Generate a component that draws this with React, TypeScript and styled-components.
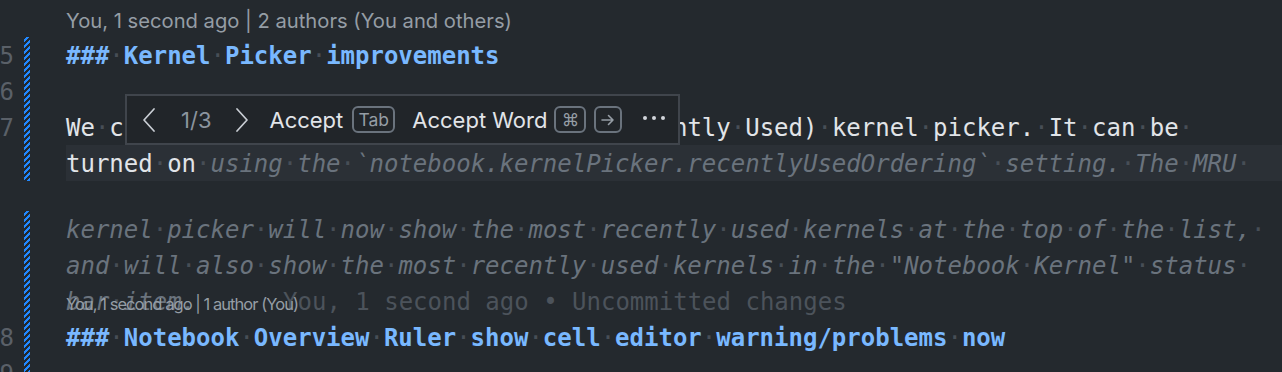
import React from 'react';
import styled, { createGlobalStyle } from 'styled-components';

const GlobalStyle = createGlobalStyle`
  html, body {
    margin: 0;
    padding: 0;
    background: #24292e;
  }
  body {
    width: 1282px;
    height: 372px;
    overflow: hidden;
  }
`;

const Editor = styled.div`
  position: relative;
  width: 1282px;
  height: 372px;
  overflow: hidden;
  background: #24292e;
  font-family: 'DejaVu Sans Mono', 'Liberation Mono', monospace;
  font-size: 24px;
`;

const Row = styled.div<{ $h?: number }>`
  display: flex;
  height: ${({ $h }) => $h ?? 36}px;
  line-height: 38px;
`;

const LineNo = styled.div`
  flex: none;
  width: 14px;
  display: flex;
  justify-content: flex-end;
  color: #5a6068;
  white-space: nowrap;
`;

const Stripe = styled.div<{ $on?: boolean }>`
  flex: none;
  width: 6px;
  margin-left: 10px;
  background: ${({ $on }) =>
    $on
      ? 'repeating-linear-gradient(-45deg, #2188ff 0px, #2188ff 2.2px, transparent 2.2px, transparent 4.25px)'
      : 'transparent'};
`;

const Content = styled.div<{ $current?: boolean }>`
  position: relative;
  flex: 1;
  margin-left: 36px;
  white-space: pre;
  color: #e1e4e8;
  background: ${({ $current }) => ($current ? '#2b3036' : 'transparent')};
`;

const Heading = styled.span`
  color: #79b8ff;
  font-weight: bold;
`;

const Plain = styled.span`
  color: #e1e4e8;
`;

const Ghost = styled.span`
  color: #6a737d;
  font-style: italic;
`;

const Dot = styled.span`
  color: #474e56;
  font-style: normal;
  font-weight: normal;
`;

const Blame = styled.span`
  margin-left: 87px;
  color: #4c535b;
`;

const CodeLens = styled.div<{ $overlay?: boolean }>`
  position: ${({ $overlay }) => ($overlay ? 'absolute' : 'static')};
  left: 0;
  top: 3px;
  padding-top: ${({ $overlay }) => ($overlay ? 0 : 3)}px;
  line-height: 36px;
  font-family: Inter, 'Noto Sans', sans-serif;
  font-size: ${({ $overlay }) => ($overlay ? 16.5 : 20.2)}px;
  letter-spacing: ${({ $overlay }) => ($overlay ? -0.95 : 0)}px;
  color: #959da5;
  white-space: nowrap;
`;

const Toolbar = styled.div`
  position: absolute;
  left: 59px;
  top: -15px;
  width: 555px;
  height: 51px;
  box-sizing: border-box;
  border: 2px solid #40454c;
  background: #212529;
  display: flex;
  align-items: center;
  gap: 20px;
  padding-left: 15px;
  font-family: Inter, 'Noto Sans', sans-serif;
  font-size: 22px;
  line-height: 1;
  color: #e1e4e8;
`;

const Group = styled.div<{ $gap: number; $ml?: number }>`
  display: flex;
  align-items: center;
  gap: ${({ $gap }) => $gap}px;
  margin-left: ${({ $ml }) => $ml ?? 0}px;
`;

const Count = styled.span`
  color: #8b949e;
  margin-left: 1px;
`;

const Kbd = styled.span<{ $w: number }>`
  box-sizing: border-box;
  width: ${({ $w }) => $w}px;
  height: 27px;
  border: 2px solid #6a737d;
  border-radius: 6px;
  display: flex;
  align-items: center;
  justify-content: center;
  color: #959da5;
  font-size: 17.5px;
  font-family: Inter, 'DejaVu Sans', sans-serif;
`;

const Icon = styled.svg`
  display: block;
  flex: none;
`;

function ws(text: string) {
  const parts = text.split(' ');
  return parts.map((p, i) => (
    <React.Fragment key={i}>
      {p}
      {i < parts.length - 1 && <Dot>·</Dot>}
    </React.Fragment>
  ));
}

const Chevron = ({ dir }: { dir: 'left' | 'right' }) => (
  <Icon width="14" height="26" viewBox="0 0 14 26">
    <path
      d={dir === 'left' ? 'M12 2 L2 13 L12 24' : 'M2 2 L12 13 L2 24'}
      fill="none"
      stroke="#c9ced4"
      strokeWidth="1.7"
      strokeLinecap="round"
      strokeLinejoin="round"
    />
  </Icon>
);

const Arrow = () => (
  <Icon width="14" height="12" viewBox="0 0 14 12">
    <path d="M1 6 H12 M7.5 1.5 L12 6 L7.5 10.5" fill="none" stroke="#959da5" strokeWidth="1.6" strokeLinecap="round" strokeLinejoin="round" />
  </Icon>
);

const More = () => (
  <Icon width="24" height="20" viewBox="0 0 24 20">
    <circle cx="3" cy="8" r="2" fill="#d1d5da" />
    <circle cx="12" cy="8" r="2" fill="#d1d5da" />
    <circle cx="21" cy="8" r="2" fill="#d1d5da" />
  </Icon>
);

export default function App() {
  return (
    <>
      <GlobalStyle />
      <Editor>
        <Row $h={37}>
          <LineNo />
          <Stripe />
          <Content>
            <CodeLens>You, 1 second ago | 2 authors (You and others)</CodeLens>
          </Content>
        </Row>
        <Row>
          <LineNo>5</LineNo>
          <Stripe $on />
          <Content>
            <Heading>{ws('### Kernel Picker improvements')}</Heading>
          </Content>
        </Row>
        <Row>
          <LineNo>6</LineNo>
          <Stripe $on />
          <Content />
        </Row>
        <Row>
          <LineNo>7</LineNo>
          <Stripe $on />
          <Content>
            <Plain>{ws('We created the experimental MRU (Most Recently Used) kernel picker. It can be ')}</Plain>
            <Toolbar>
              <Group $gap={24}>
                <Chevron dir="left" />
                <Count>1/3</Count>
                <Chevron dir="right" />
              </Group>
              <Group $gap={9}>
                <span>Accept</span>
                <Kbd $w={43}>Tab</Kbd>
              </Group>
              <Group $gap={8} $ml={-3}>
                <span style={{ marginRight: -1 }}>Accept Word</span>
                <Kbd $w={32}>⌘</Kbd>
                <Kbd $w={28}>
                  <Arrow />
                </Kbd>
              </Group>
              <More />
            </Toolbar>
          </Content>
        </Row>
        <Row>
          <LineNo />
          <Stripe $on />
          <Content $current>
            <Plain>{ws('turned on')}</Plain>
            <Dot>·</Dot>
            <Ghost>{ws('using the `notebook.kernelPicker.recentlyUsedOrdering` setting. The MRU ')}</Ghost>
          </Content>
        </Row>
        <Row $h={30}>
          <LineNo />
          <Stripe />
          <Content />
        </Row>
        <Row>
          <LineNo />
          <Stripe $on />
          <Content>
            <Ghost>{ws('kernel picker will now show the most recently used kernels at the top of the list, ')}</Ghost>
          </Content>
        </Row>
        <Row>
          <LineNo />
          <Stripe $on />
          <Content>
            <Ghost>{ws('and will also show the most recently used kernels in the "Notebook Kernel" status ')}</Ghost>
          </Content>
        </Row>
        <Row>
          <LineNo />
          <Stripe $on />
          <Content>
            <Ghost>{ws('bar item.')}</Ghost>
            <Blame>You, 1 second ago • Uncommitted changes</Blame>
            <CodeLens $overlay>You, 1 second ago | 1 author (You)</CodeLens>
          </Content>
        </Row>
        <Row>
          <LineNo>8</LineNo>
          <Stripe $on />
          <Content>
            <Heading>{ws('### Notebook Overview Ruler show cell editor warning/problems now')}</Heading>
          </Content>
        </Row>
        <Row>
          <LineNo>9</LineNo>
          <Stripe $on />
          <Content />
        </Row>
      </Editor>
    </>
  );
}
